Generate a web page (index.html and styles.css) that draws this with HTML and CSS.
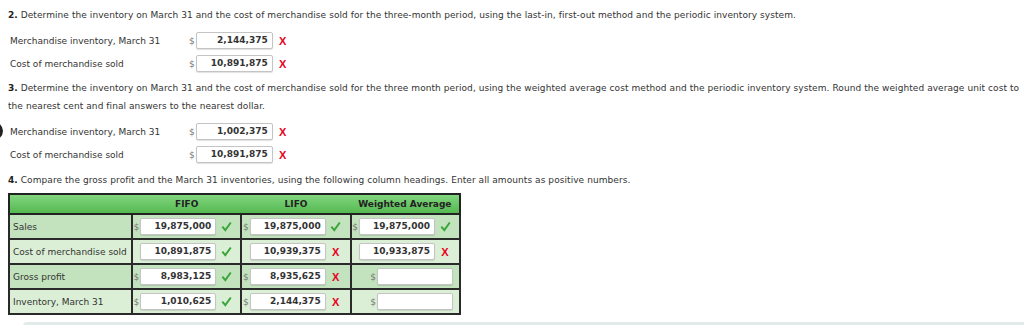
FILE: index.html
```html
<!DOCTYPE html>
<html lang="en">
<head>
<meta charset="utf-8">
<title>Inventory</title>
<link rel="stylesheet" href="styles.css">
</head>
<body>
<div class="page">
  <span class="edge"></span>

  <p class="q"><b>2.</b> Determine the inventory on March 31 and the cost of merchandise sold for the three-month period, using the last-in, first-out method and the periodic inventory system.</p>
  <div class="answers a2">
    <div class="arow"><span class="lbl">Merchandise inventory, March 31</span><span class="cur">$</span><span class="inp">2,144,375</span><span class="mark x">X</span></div>
    <div class="arow"><span class="lbl">Cost of merchandise sold</span><span class="cur">$</span><span class="inp">10,891,875</span><span class="mark x">X</span></div>
  </div>

  <p class="q"><b>3.</b> Determine the inventory on March 31 and the cost of merchandise sold for the three month period, using the weighted average cost method and the periodic inventory system. Round the weighted average unit cost to the nearest cent and final answers to the nearest dollar.</p>
  <div class="answers">
    <div class="arow"><span class="lbl">Merchandise inventory, March 31</span><span class="cur">$</span><span class="inp">1,002,375</span><span class="mark x">X</span></div>
    <div class="arow"><span class="lbl">Cost of merchandise sold</span><span class="cur">$</span><span class="inp">10,891,875</span><span class="mark x">X</span></div>
  </div>

  <p class="q q4"><b>4.</b> Compare the gross profit and the March 31 inventories, using the following column headings. Enter all amounts as positive numbers.</p>

  <table class="cmp">
    <thead>
      <tr><th class="c-lbl"></th><th>FIFO</th><th>LIFO</th><th class="c-wa">Weighted Average</th></tr>
    </thead>
    <tbody>
      <tr class="dark">
        <td class="c-lbl">Sales</td>
        <td><div class="cell"><span class="cur">$</span><span class="inp">19,875,000</span><span class="mark ok"><svg viewBox="0 0 10 10"><path d="M1.2 5.2 L3.9 8.3 L8.9 1.4"/></svg></span></div></td>
        <td><div class="cell"><span class="cur">$</span><span class="inp">19,875,000</span><span class="mark ok"><svg viewBox="0 0 10 10"><path d="M1.2 5.2 L3.9 8.3 L8.9 1.4"/></svg></span></div></td>
        <td><div class="cell"><span class="cur">$</span><span class="inp">19,875,000</span><span class="mark ok"><svg viewBox="0 0 10 10"><path d="M1.2 5.2 L3.9 8.3 L8.9 1.4"/></svg></span></div></td>
      </tr>
      <tr class="light">
        <td class="c-lbl">Cost of merchandise sold</td>
        <td><div class="cell"><span class="inp">10,891,875</span><span class="mark ok"><svg viewBox="0 0 10 10"><path d="M1.2 5.2 L3.9 8.3 L8.9 1.4"/></svg></span></div></td>
        <td><div class="cell"><span class="inp">10,939,375</span><span class="mark x">X</span></div></td>
        <td><div class="cell"><span class="inp">10,933,875</span><span class="mark x">X</span></div></td>
      </tr>
      <tr class="dark">
        <td class="c-lbl">Gross profit</td>
        <td><div class="cell"><span class="cur">$</span><span class="inp">8,983,125</span><span class="mark ok"><svg viewBox="0 0 10 10"><path d="M1.2 5.2 L3.9 8.3 L8.9 1.4"/></svg></span></div></td>
        <td><div class="cell"><span class="cur">$</span><span class="inp">8,935,625</span><span class="mark x">X</span></div></td>
        <td><div class="cell"><span class="cur">$</span><span class="inp"></span></div></td>
      </tr>
      <tr class="light">
        <td class="c-lbl">Inventory, March 31</td>
        <td><div class="cell"><span class="cur">$</span><span class="inp">1,010,625</span><span class="mark ok"><svg viewBox="0 0 10 10"><path d="M1.2 5.2 L3.9 8.3 L8.9 1.4"/></svg></span></div></td>
        <td><div class="cell"><span class="cur">$</span><span class="inp">2,144,375</span><span class="mark x">X</span></div></td>
        <td><div class="cell"><span class="cur">$</span><span class="inp"></span></div></td>
      </tr>
    </tbody>
  </table>

  <div class="footer-bar"></div>
</div>
</body>
</html>
```

FILE: styles.css
```css
* { box-sizing: border-box; }

html, body {
  margin: 0;
  padding: 0;
  background: #ffffff;
}

body {
  font-family: "DejaVu Sans", Verdana, sans-serif;
  font-size: 9px;
  color: #333333;
  overflow: hidden;
}

.page {
  position: relative;
  padding: 6px 0 0 8px;
}

.edge {
  position: absolute;
  left: -19px;
  top: 121px;
  width: 22px;
  height: 20px;
  border-radius: 50%;
  background: #222222;
}

.q {
  margin: 0;
  line-height: 18px;
  width: 1012px;
  letter-spacing: 0.07px;
}

.q b { color: #222222; }

.answers {
  margin: 5px 0;
}

.answers.a2 {
  margin-bottom: 4px;
}

.arow {
  display: flex;
  align-items: center;
  height: 23px;
  padding-left: 2px;
}

.arow .lbl {
  width: 179px;
}

.cur {
  color: #777777;
  font-size: 9px;
  margin-right: 1px;
}

.inp {
  display: inline-block;
  width: 77px;
  height: 17px;
  line-height: 15px;
  border: 1px solid #c4c4c4;
  border-radius: 2px;
  box-shadow: 0 1px 1px rgba(0,0,0,0.12);
  background: #ffffff;
  text-align: right;
  padding-right: 4px;
  font-weight: bold;
  color: #333333;
}

.mark {
  display: inline-flex;
  align-items: center;
  justify-content: center;
  width: 16px;
  margin-left: 2px;
}

.mark.x {
  font-family: "Liberation Sans", Arial, sans-serif;
  font-weight: bold;
  font-size: 11px;
  color: #e8001c;
}

.mark.ok svg {
  width: 11px;
  height: 11px;
}

.mark.ok path {
  fill: none;
  stroke: #3aa53a;
  stroke-width: 1.8;
}

.q4 { margin-bottom: 4px; }

.cmp {
  border-collapse: collapse;
  border: 2px solid #222222;
  width: 453px;
  margin-bottom: 7px;
}

.cmp th {
  height: 20px;
  padding: 0;
  font-weight: bold;
  color: #222222;
  text-align: center;
  background: linear-gradient(#82d67f, #55b952);
  border-bottom: 2px solid #222222;
}

.cmp td {
  height: 25px;
  padding: 0;
  border: 2px solid #2a2a2a;
}

.cmp .c-lbl {
  width: 123px;
  padding-left: 3px;
}

.cmp tr.dark td { background: #c3e3be; }
.cmp tr.light td { background: #dbefd6; }

.cell {
  display: flex;
  align-items: center;
  justify-content: flex-end;
  padding-right: 6px;
}

.cmp .inp {
  width: 76px;
}

.footer-bar {
  margin-left: 15px;
  height: 10px;
  background: #e2eaea;
  border-radius: 4px 0 0 0;
}
```
